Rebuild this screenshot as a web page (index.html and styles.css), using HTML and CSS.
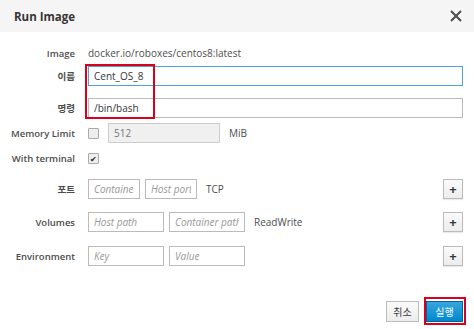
FILE: index.html
```html
<!DOCTYPE html>
<html lang="ko">
<head>
    <meta charset="UTF-8">
    <title>Run Image</title>
    <link rel="stylesheet" href="styles.css">
</head>
<body>
    <div class="dialog">
        <div class="dialog-header">
            <h4>Run Image</h4>
            <svg class="close" width="12" height="12" viewBox="0 0 12 12">
                <path d="M1 1 L11 11 M11 1 L1 11" stroke="#4d4d4d" stroke-width="2" fill="none"/>
            </svg>
        </div>

        <div class="dialog-body">
            <div class="row r-image">
                <label>Image</label>
                <div class="value">docker.io/roboxes/centos8:latest</div>
            </div>
            <div class="row r-name">
                <label>이름</label>
                <input type="text" class="wide focus" value="Cent_OS_8">
            </div>
            <div class="row r-cmd">
                <label>명령</label>
                <input type="text" class="wide" value="/bin/bash">
            </div>
            <div class="row r-mem">
                <label>Memory Limit</label>
                <div class="fields">
                    <span class="check"></span>
                    <input type="text" class="mem" value="512" disabled>
                    <span class="unit">MiB</span>
                </div>
            </div>
            <div class="row r-term">
                <label>With terminal</label>
                <div class="fields">
                    <span class="check checked">&#10004;</span>
                </div>
            </div>
            <div class="row r-port">
                <label>포트</label>
                <div class="fields">
                    <input type="text" class="short" placeholder="Container port">
                    <input type="text" class="short" placeholder="Host port">
                    <span class="unit">TCP</span>
                    <button class="plus">+</button>
                </div>
            </div>
            <div class="row r-vol">
                <label>Volumes</label>
                <div class="fields">
                    <input type="text" class="mid" placeholder="Host path">
                    <input type="text" class="mid" placeholder="Container path">
                    <span class="unit">ReadWrite</span>
                    <button class="plus">+</button>
                </div>
            </div>
            <div class="row r-env">
                <label>Environment</label>
                <div class="fields">
                    <input type="text" class="mid" placeholder="Key">
                    <input type="text" class="mid" placeholder="Value">
                    <button class="plus">+</button>
                </div>
            </div>
        </div>

        <div class="dialog-footer">
            <button class="btn">취소</button>
            <button class="btn primary">실행</button>
        </div>

        <!-- red marks drawn over the screenshot -->
        <div class="mark mark-inputs"></div>
        <div class="mark mark-run"></div>
    </div>
</body>
</html>
```
FILE: styles.css
```css
body {
    margin: 0;
    background: #fff;
    font-family: "Open Sans", "Noto Sans CJK KR", sans-serif;
    font-size: 10px;
    color: #363636;
}
.dialog {
    position: relative;
    width: 474px;
    height: 329px;
    background: #fff;
}
.dialog-header {
    height: 32px;
    background: #f5f5f5;
    display: flex;
    align-items: center;
    justify-content: space-between;
    padding: 0 12px 0 14px;
}
.dialog-header h4 {
    margin: 0;
    font-size: 11.5px;
    font-weight: 700;
    color: #363636;
}
.dialog-body {
    padding-top: 11px;
}
.row {
    display: grid;
    grid-template-columns: 75px 1fr;
    column-gap: 13px;
    align-items: center;
    height: 20px;
    padding-right: 11px;
}
.row label {
    text-align: right;
    font-weight: 600;
    font-size: 9.5px;
    color: #4d4d4d;
}
.r-name { margin-top: 3px; }
.r-cmd { margin-top: 12px; }
.r-mem { margin-top: 5px; }
.r-term { margin-top: 5px; }
.r-port { margin-top: 11px; }
.r-vol { margin-top: 13px; }
.r-env { margin-top: 14px; }
.value {
    color: #4d4d4d;
}
input {
    box-sizing: border-box;
    height: 20px;
    border: 1px solid #bbb;
    font-family: inherit;
    font-size: 10px;
    color: #363636;
    padding: 0 5px;
    margin: 0;
    background: #fff;
}
input::placeholder {
    color: #999;
    font-style: italic;
}
input.wide {
    width: 100%;
}
input.focus {
    border-color: #4fa4d6;
}
.fields {
    display: flex;
    align-items: center;
    gap: 5px;
}
.check {
    width: 9px;
    height: 9px;
    border: 1px solid #aaa;
    background: #eee;
    border-radius: 1px;
    margin-right: 4px;
    font-size: 8px;
    line-height: 9px;
    text-align: center;
    color: #222;
}
input.mem {
    width: 112px;
    background: #f0f0f0;
    border-color: #ccc;
    color: #777;
}
.unit {
    margin-left: 4px;
    color: #4d4d4d;
}
input.short {
    width: 52px;
}
input.mid {
    width: 76px;
}
.plus {
    margin-left: auto;
    width: 20px;
    height: 20px;
    padding: 0;
    border: 1px solid #bbb;
    background: linear-gradient(#fafafa, #ededed);
    box-shadow: 0 1px 1px rgba(0, 0, 0, 0.08);
    font-family: inherit;
    font-size: 13px;
    font-weight: 700;
    line-height: 16px;
    color: #363636;
}
.dialog-footer {
    display: flex;
    justify-content: flex-end;
    gap: 7px;
    padding: 35px 11px 0 0;
}
.btn {
    height: 21px;
    width: 33px;
    padding: 0;
    border: 1px solid #bbb;
    background: linear-gradient(#fafafa, #ededed);
    font-family: inherit;
    font-size: 10px;
    color: #363636;
}
.btn.primary {
    background: linear-gradient(#39a5dc, #0088ce);
    border-color: #00659c;
    color: #fff;
    width: 37px;
}
.mark {
    position: absolute;
    border: 2px solid #d9001b;
    box-sizing: border-box;
}
.mark-inputs {
    left: 85px;
    top: 64px;
    width: 70px;
    height: 55px;
}
.mark-run {
    left: 424px;
    top: 297px;
    width: 42px;
    height: 28px;
}
```
